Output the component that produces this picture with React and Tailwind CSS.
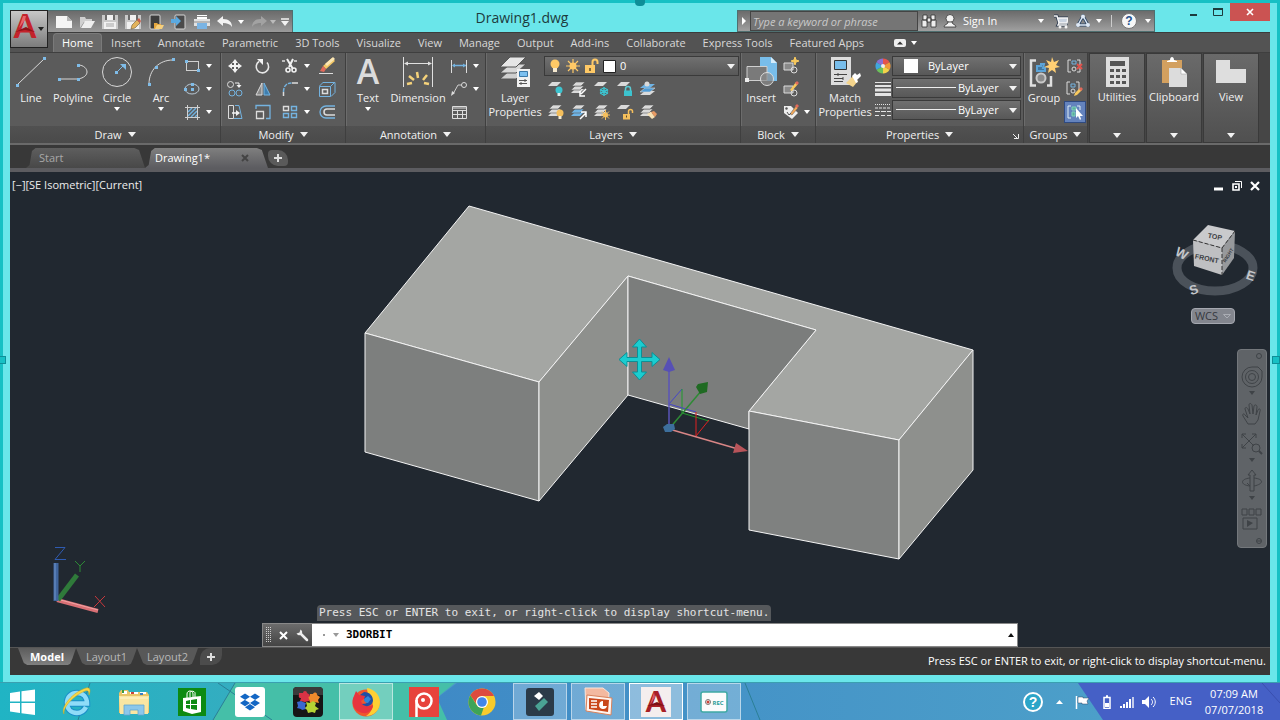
import React, { useState } from 'react';
import { FaDropbox } from 'react-icons/fa';

const Icon = ({ w = 16, h = 16, children, className = '' }) => (
    <svg width={w} height={h} viewBox={`0 0 ${w} ${h}`} fill="none" aria-hidden="true" className={`shrink-0 ${className}`}>
        {children}
    </svg>
);

const Caret = ({ className = 'text-white' }) => (
    <Icon w={6} h={4} className={className}>
        <path d="M0 0h6L3 4z" fill="currentColor" />
    </Icon>
);

const BigCaret = () => (
    <Icon w={8} h={5}>
        <path d="M0 0h8L4 5z" fill="#f2f2f2" />
    </Icon>
);

/* ---------- quick access icons ---------- */

const quickIcons = {
    New: (
        <Icon w={16} h={16}>
            <path d="M0 2h11l5 5v7H0z" fill="#f4f4f4" />
            <path d="M11 2v5h5z" fill="#b5b5b5" />
        </Icon>
    ),
    Open: (
        <Icon w={16} h={16}>
            <path d="M1 14V3h5l1 2h6v3H5z" fill="#cfcfcf" />
            <path d="M2 14l4-7h10l-4 7z" fill="#eeeeee" />
        </Icon>
    ),
    Save: (
        <Icon w={16} h={16}>
            <path d="M0 1h16v14H0z" fill="#c9c9c9" />
            <path d="M3 1h10v5H3z" fill="#6b6b6b" />
            <path d="M5 1h6v5H5zM2 8h12v7H2z" fill="#f1f1f1" />
            <path d="M4 10h8M4 12h8" stroke="#a5a5a5" />
        </Icon>
    ),
    'Save As': (
        <Icon w={16} h={16}>
            <path d="M0 1h16v14H0z" fill="#c9c9c9" />
            <path d="M3 1h10v5H3z" fill="#6b6b6b" />
            <path d="M5 1h6v5H5zM2 8h12v7H2z" fill="#f1f1f1" />
            <path d="M6 15l1-4 5-5 3 3-5 5z" fill="#e3b35b" stroke="#6b5a3a" strokeWidth=".6" />
            <path d="M12 6l2-2 2 3-1 2z" fill="#c9604c" />
        </Icon>
    ),
    'Open from Mobile': (
        <Icon w={16} h={16}>
            <rect x="2" y="1" width="10" height="14" rx="1" fill="#3d3d3d" stroke="#d5d5d5" />
            <path d="M6 15V9h3l1 1h3v5z" fill="#e4a63f" />
            <path d="M7 15l2-4h7l-2 4z" fill="#f6cf7c" />
        </Icon>
    ),
    'Save to Mobile': (
        <Icon w={16} h={16}>
            <rect x="4" y="1" width="10" height="14" rx="1" fill="#4b4b4b" stroke="#d5d5d5" />
            <path d="M0 5h5V2l5 5-5 5V9H0z" fill="#5aa9e0" />
        </Icon>
    ),
    Plot: (
        <Icon w={16} h={16}>
            <path d="M3 1h10v4H3z" fill="#ffffff" />
            <path d="M0 5h16v7H0z" fill="#e2e2e2" />
            <path d="M3 2.500h10M0 8h16" stroke="#8a8a8a" />
            <path d="M3 9h10v6H3z" fill="#7ab4e4" />
        </Icon>
    ),
    Undo: (
        <Icon w={16} h={16}>
            <path d="M0 7l6-5v3c6 0 9 3 9 8-2-3-5-4-9-4v3z" fill="#f2f2f2" />
        </Icon>
    ),
    Redo: (
        <Icon w={16} h={16}>
            <path d="M16 7l-6-5v3c-6 0-9 3-9 8 2-3 5-4 9-4v3z" fill="#a2a2a2" />
        </Icon>
    ),
};

/* ---------- small ribbon icons, 18 x 18 ---------- */

const Dot = ({ x, y }) => <rect x={x - 1} y={y - 1} width="3" height="3" fill="#7fbce8" />;

const Sheets = ({ a = '#dadada', b = '#dadada' }) => (
    <>
        <path d="M1 13h9l4-4H5z" fill={b} />
        <path d="M1 10h9l4-4H5z" fill={b} stroke="#5a5a5a" strokeWidth=".6" />
        <path d="M2 6h9l4-4H6z" fill={a} stroke="#5a5a5a" strokeWidth=".6" />
    </>
);

const Sheet = () => <path d="M1 6h9l4-4H5z" fill="#dadada" />;

const small = {
    Rectangle: (
        <Icon w={18} h={18}>
            <rect x="3.5" y="4.5" width="12" height="9" stroke="#d0d0d0" />
            <Dot x={3} y={4} />
            <Dot x={15} y={13} />
        </Icon>
    ),
    Ellipse: (
        <Icon w={18} h={18}>
            <ellipse cx="9" cy="9" rx="7" ry="5" stroke="#b9c9d6" />
            <Dot x={9} y={9} />
            <Dot x={2} y={9} />
            <Dot x={9} y={4} />
        </Icon>
    ),
    Hatch: (
        <Icon w={18} h={18}>
            <path d="M5 9l4-4M5 13l8-8M8 14l6-6M12 14l2-2" stroke="#6fb0de" strokeWidth="1.500" />
            <path d="M4.500 2v15M14.500 2v15M2 4.500h15M2 14.500h15" stroke="#d0d0d0" />
        </Icon>
    ),
    Move: (
        <Icon w={18} h={18}>
            <path d="M9 2l3 4h-2v2h2V6l4 3-4 3v-2h-2v2h2l-3 4-3-4h2v-2H6v2L2 9l4-3v2h2V6H6z" fill="#f2f2f2" />
        </Icon>
    ),
    Rotate: (
        <Icon w={18} h={18}>
            <path d="M5 4.500a6.200 6.200 0 1 0 8 1" stroke="#e8e8e8" strokeWidth="1.600" />
            <path d="M3 2h6v6z" fill="#f2f2f2" />
        </Icon>
    ),
    Trim: (
        <Icon w={18} h={18}>
            <path d="M1 4h4M13 4h4" stroke="#e0e0e0" strokeWidth="1.500" strokeDasharray="3 1" />
            <path d="M6 2l6 10M12 2L8 10" stroke="#f2f2f2" strokeWidth="2" />
            <circle cx="7" cy="13" r="2" stroke="#f2f2f2" strokeWidth="1.600" />
            <circle cx="13" cy="13" r="2" stroke="#f2f2f2" strokeWidth="1.600" />
        </Icon>
    ),
    Erase: (
        <Icon w={18} h={18}>
            <path d="M5 9l9-8 3 3-9 8z" fill="#f3c765" />
            <path d="M7 7l8-7 2 2-8 7z" fill="#fbe6b4" />
            <path d="M5 9l3 3-2 3-4-1z" fill="#e26a5b" />
            <path d="M1 16.500h14" stroke="#dcdcdc" />
        </Icon>
    ),
    Copy: (
        <Icon w={18} h={18}>
            <circle cx="4.500" cy="4.500" r="3" stroke="#dcdcdc" />
            <circle cx="6" cy="13" r="3" stroke="#74b3e0" />
            <circle cx="13" cy="13" r="3" stroke="#74b3e0" />
            <path d="M9 3h4v3" stroke="#f2f2f2" />
            <path d="M10.500 5h5L13 8z" fill="#f2f2f2" />
        </Icon>
    ),
    Mirror: (
        <Icon w={18} h={18}>
            <path d="M8 3v12H2z" fill="#8a8a8a" stroke="#dcdcdc" />
            <path d="M10 3v12h6z" fill="#3f7eae" stroke="#74b3e0" />
        </Icon>
    ),
    Fillet: (
        <Icon w={18} h={18}>
            <path d="M2.500 16v-4" stroke="#dcdcdc" strokeWidth="1.500" />
            <path d="M2.500 12c0-6 3-9 8-9" stroke="#74b3e0" strokeWidth="1.500" strokeDasharray="4 1" />
            <path d="M11 3h6" stroke="#dcdcdc" strokeWidth="1.500" />
        </Icon>
    ),
    Explode: (
        <Icon w={18} h={18}>
            <path d="M1.500 6.500h11v10h-11zM5 2.500h12v10l-4 4M1.500 6l4-4M12.500 6.500l4-4" stroke="#74b3e0" />
            <path d="M4.500 9.500h5v4h-5z" stroke="#dcdcdc" strokeWidth="1.500" />
        </Icon>
    ),
    Stretch: (
        <Icon w={18} h={18}>
            <path d="M2.500 2.500h5v13h-5z" stroke="#dcdcdc" />
            <path d="M9 2.500h4l3 13H8" stroke="#74b3e0" />
            <path d="M6 10h5" stroke="#f2f2f2" strokeWidth="1.500" />
            <path d="M10 7l4 3-4 3z" fill="#f2f2f2" />
        </Icon>
    ),
    Scale: (
        <Icon w={18} h={18}>
            <path d="M2 6V2.500h14v13h-4" stroke="#74b3e0" strokeWidth="1.300" />
            <path d="M2.500 8.500h7v7h-7z" stroke="#dcdcdc" strokeWidth="1.300" />
        </Icon>
    ),
    Array: (
        <Icon w={18} h={18}>
            <path d="M2.500 3.500h5v4h-5z" stroke="#dcdcdc" strokeWidth="1.400" />
            <path d="M10.500 3.500h5v4h-5zM2.500 10.500h5v4h-5zM10.500 10.500h5v4h-5z" stroke="#74b3e0" strokeWidth="1.400" />
        </Icon>
    ),
    Offset: (
        <Icon w={18} h={18}>
            <path d="M17 3H8a6 6 0 0 0 0 12h9" stroke="#74b3e0" strokeWidth="1.300" />
            <path d="M17 6H9a3 3 0 0 0 0 6h8" stroke="#dcdcdc" strokeWidth="1.500" />
        </Icon>
    ),
    Linear: (
        <Icon w={18} h={18}>
            <path d="M1.500 3v13M16.500 3v13" stroke="#dcdcdc" />
            <path d="M3 8.500h13" stroke="#74b3e0" strokeWidth="1.500" />
            <path d="M2 8.500l3-2v4zM16 8.500l-3-2v4z" fill="#74b3e0" />
        </Icon>
    ),
    Leader: (
        <Icon w={18} h={18}>
            <circle cx="14" cy="5" r="2.500" stroke="#dcdcdc" />
            <path d="M12 5H8l-5 9" stroke="#cfcfcf" />
            <path d="M1 16l1-5 3 2z" fill="#dcdcdc" />
        </Icon>
    ),
    Table: (
        <Icon w={18} h={18}>
            <path d="M2.500 3.500h14v12h-14zM2 7.500h15M2 11.500h15M7.500 7v9M12.500 7v9" stroke="#dcdcdc" />
            <path d="M3 5h13" stroke="#dcdcdc" />
        </Icon>
    ),
    Off: (
        <Icon w={18} h={18}>
            <Sheet />
            <circle cx="12" cy="10" r="3.500" fill="#3cc3cf" />
            <path d="M10.500 13h3v3h-3z" fill="#e0f0f0" />
        </Icon>
    ),
    Isolate: (
        <Icon w={18} h={18}>
            <Sheets />
            <path d="M16 9l-5 5M10 11v5h5" stroke="#ffffff" strokeWidth="1.500" />
        </Icon>
    ),
    Freeze: (
        <Icon w={18} h={18}>
            <Sheet />
            <path d="M11 7v9M7 9.500l8 4M15 9.500l-8 4" stroke="#3cc3cf" strokeWidth="1.500" />
            <circle cx="11" cy="11.500" r="3.500" stroke="#3cc3cf" />
        </Icon>
    ),
    Lock: (
        <Icon w={18} h={18}>
            <Sheet />
            <path d="M9.500 11V9a2.500 2.500 0 0 1 5 0v2" stroke="#5bcad3" strokeWidth="1.500" />
            <path d="M8 10.500h8V16H8z" fill="#3cc3cf" />
        </Icon>
    ),
    'Make Current': (
        <Icon w={18} h={18}>
            <path d="M1 15h10l5-4H6z" fill="#dadada" />
            <path d="M1 12h10l5-4H6z" fill="#4f9cd6" stroke="#dadada" strokeWidth=".6" />
            <path d="M1 8h10l5-4H6z" fill="#6fb4e6" />
            <circle cx="8" cy="4" r="2.500" fill="#dadada" />
        </Icon>
    ),
    'Turn On': (
        <Icon w={18} h={18}>
            <Sheets />
            <circle cx="13" cy="10" r="3.500" fill="#f5bf5c" />
            <path d="M11.500 13h3v3h-3z" fill="#f5ead0" />
        </Icon>
    ),
    Unisolate: (
        <Icon w={18} h={18}>
            <Sheets b="#6fb4e6" />
            <path d="M10 16l6-6M11 9h5v5" stroke="#ffffff" strokeWidth="1.500" />
        </Icon>
    ),
    Thaw: (
        <Icon w={18} h={18}>
            <Sheets />
            <circle cx="12.500" cy="12" r="2.500" fill="#f5bf5c" />
            <path d="M12.500 7v10M8 12h9M9 8.500l7 7M16 8.500l-7 7" stroke="#f5bf5c" />
        </Icon>
    ),
    Unlock: (
        <Icon w={18} h={18}>
            <Sheet />
            <path d="M12.500 11V8.500a2 2 0 0 1 4 0V10" stroke="#f5bf5c" strokeWidth="1.500" />
            <path d="M7 11h7v5.500H7z" fill="#f5bf5c" />
            <path d="M10.500 12.500v2" stroke="#5a4a2a" />
        </Icon>
    ),
    'Match Layer': (
        <Icon w={18} h={18}>
            <Sheets />
            <path d="M8 11l4-2 4 5-3 2z" fill="#f7e2b5" />
            <path d="M12 9l3-1 3 3-2 3z" fill="#e89a63" />
        </Icon>
    ),
    'Create Block': (
        <Icon w={18} h={18}>
            <path d="M2 13V6h9v7z" fill="#8a8a8a" stroke="#dcdcdc" />
            <circle cx="12" cy="13" r="3" stroke="#dcdcdc" />
            <path d="M13 0l1 3 3 1-3 1-1 3-1-3-3-1 3-1z" fill="#f8c95e" stroke="#f8c95e" />
        </Icon>
    ),
    'Edit Block': (
        <Icon w={18} h={18}>
            <path d="M2 13V6h9v7z" fill="#8a8a8a" stroke="#dcdcdc" />
            <circle cx="12" cy="13" r="3" stroke="#dcdcdc" />
            <path d="M8 10l6-8 2 2-6 7z" fill="#f8c95e" />
            <path d="M13 3l2-2 2 2-2 2z" fill="#e26a5b" />
        </Icon>
    ),
    'Edit Attributes': (
        <Icon w={18} h={18}>
            <path d="M2 3h7l7 7-6 6-8-6z" fill="#eeeeee" />
            <circle cx="4.500" cy="5.500" r="1.200" fill="#555" />
            <path d="M8 11l6-8 2 2-6 7z" fill="#f3a858" stroke="#555" strokeWidth=".5" />
            <path d="M13 3l2-2 2 2-2 2z" fill="#e26a5b" />
            <path d="M5 9l2 3 2-2" stroke="#555" />
        </Icon>
    ),
    Ungroup: (
        <Icon w={18} h={18}>
            <path d="M5 3H2v12h3M11 3h3v12h-3" stroke="#dcdcdc" />
            <path d="M6 4h4v3H6z" stroke="#74b3e0" />
            <circle cx="8" cy="12" r="2" stroke="#dcdcdc" />
            <path d="M11 7l5 5M16 7l-5 5" stroke="#e0524c" strokeWidth="2" />
        </Icon>
    ),
    'Group Edit': (
        <Icon w={18} h={18}>
            <path d="M4 2H1v12h3M10 2h3v8" stroke="#dcdcdc" />
            <path d="M5 4h4v3H5z" stroke="#74b3e0" />
            <circle cx="7" cy="11" r="2" stroke="#dcdcdc" />
            <path d="M8 16l1-3 5-5 2 2-5 5z" fill="#f8c95e" />
            <path d="M13 9l2-2 2 2-2 2z" fill="#e26a5b" />
        </Icon>
    ),
    'Group Selection': (
        <Icon w={18} h={18}>
            <path d="M5 3H2v12h3M11 3h3v4" stroke="#dcecf5" />
            <path d="M6 4h4v3H6zM6 9h3v4H6z" fill="#5dae9d" stroke="#7fd0bb" />
            <path d="M10 5v10l2-2 2 4 1-1-1-3h3z" fill="#ffffff" />
        </Icon>
    ),
};

/* ---------- large ribbon icons ---------- */

const large = {
    Line: (
        <Icon w={32} h={32}>
            <path d="M3 28L29 3" stroke="#d8d8d8" />
            <Dot x={2} y={29} />
            <Dot x={29} y={2} />
        </Icon>
    ),
    Polyline: (
        <Icon w={32} h={32}>
            <path d="M2 23h19c6-1 9-4 9-7s-3-7-9-7" stroke="#d8d8d8" />
            <Dot x={2} y={23} />
            <Dot x={21} y={23} />
            <Dot x={21} y={9} />
        </Icon>
    ),
    Circle: (
        <Icon w={32} h={32}>
            <circle cx="16" cy="16" r="14.500" stroke="#d8d8d8" />
            <path d="M16 16l7-7" stroke="#7fbce8" />
            <path d="M14 15h3v3h-3z" fill="#7fbce8" />
            <path d="M19 8h6v6z" fill="#7fbce8" />
        </Icon>
    ),
    Arc: (
        <Icon w={32} h={32}>
            <path d="M4 28C4 14 14 4 28 4" stroke="#d8d8d8" />
            <Dot x={4} y={28} />
            <Dot x={11} y={11} />
            <Dot x={28} y={3} />
        </Icon>
    ),
    Text: (
        <Icon w={32} h={32} className="overflow-visible">
            <text x="16" y="28" textAnchor="middle" fontSize="34" fontWeight="600" fontFamily="Open Sans" fill="#dcdcdc">
                A
            </text>
        </Icon>
    ),
    Dimension: (
        <Icon w={32} h={32}>
            <path d="M1.500 1v30M30.500 1v30M3 7.500h26" stroke="#e0e0e0" />
            <path d="M2 7.500l4-2v4zM30 7.500l-4-2v4z" fill="#e0e0e0" />
            <path d="M5 28l5-1M7 20l5 4M15 16l1 6M25 19l-4 5M27 28l-5-1" stroke="#f5d27a" strokeWidth="2.500" />
        </Icon>
    ),
    Layer: (
        <Icon w={32} h={32}>
            <path d="M1 23h16l10-9H11z" fill="#cfcfcf" stroke="#555" />
            <path d="M1 17h16l10-9H11z" fill="#d8d8d8" stroke="#555" />
            <path d="M1 11h16L27 1H11z" fill="#e6e6e6" stroke="#555" />
            <path d="M18 13h13v18H18z" fill="#f1f1f1" />
            <path d="M20.500 15.500h8v5h-8z" fill="#7cc0f0" stroke="#3c79a8" />
            <path d="M20 24.500h8M20 27.500h8M26 23v3M22 26v3" stroke="#555" />
        </Icon>
    ),
    Insert: (
        <Icon w={32} h={32}>
            <path d="M15 1h11l6 6v18H15z" fill="#78bdea" />
            <path d="M26 1v6h6z" fill="#d5ecfb" />
            <path d="M2 10.500h20v14H2z" fill="#7a7a7a" stroke="#cfcfcf" />
            <circle cx="22" cy="23" r="6.500" fill="#8a8a8a" fillOpacity=".7" stroke="#dcdcdc" />
            <path d="M0 22h4v4H0z" fill="#ededed" />
        </Icon>
    ),
    Match: (
        <Icon w={32} h={32}>
            <path d="M2 1h20v28H2z" fill="#dcdcdc" />
            <path d="M5.500 4.500h12v9h-12z" fill="#78bdea" stroke="#333" />
            <path d="M5 18.500h13M5 22.500h9M9 17v3M14 21v3M5 25.500h9" stroke="#444" />
            <path d="M17 27l7-7 5 5-5 6z" fill="#f5d58c" />
            <path d="M23 20l3-3 2 2 3-2 1 3-4 4 1 2-2 1z" fill="#ffffff" />
        </Icon>
    ),
    Group: (
        <Icon w={32} h={32}>
            <path d="M8 4.500H3v25h5M19 29.500h4V20" stroke="#e0e0e0" strokeWidth="2.500" />
            <path d="M9 10h4v-2h3l-1 4h2v3H9z" stroke="#5ca4d8" strokeWidth="2" fill="#42759c" />
            <circle cx="13" cy="22" r="4.500" stroke="#c9c9c9" strokeWidth="2" fill="#8a8a8a" />
            <path d="M24 1l2 5 5-2-3 5 4 2-5 1 1 5-4-3-4 3 1-5-5-1 5-2-3-5 5 2z" fill="#ffcf73" />
        </Icon>
    ),
    Utilities: (
        <Icon w={32} h={32}>
            <path d="M5 1h23v30H5z" fill="#dedede" />
            <path d="M9 5h15v5H9z" fill="#555" />
            <path d="M9 13h4v3H9zM15 13h4v3h-4zM21 13h4v3h-4zM9 19h4v3H9zM15 19h4v3h-4zM21 19h4v3h-4zM9 25h4v3H9zM15 25h4v3h-4zM21 25h4v3h-4z" fill="#555" />
        </Icon>
    ),
    Clipboard: (
        <Icon w={32} h={32}>
            <path d="M4 4h20v23H4z" fill="#d3a05f" />
            <path d="M9 5l3-1c0-4 4-4 4 0l3 1v1H9z" fill="#ffffff" />
            <path d="M11 12h12l6 6v13H11z" fill="#dcdcdc" />
            <path d="M23 12v6h6z" fill="#ffffff" stroke="#999" strokeWidth=".5" />
        </Icon>
    ),
    View: (
        <Icon w={32} h={32}>
            <path d="M1 4h14v9h16v14H1z" fill="#dedede" />
        </Icon>
    ),
};

const LargeTool = ({ icon, lines, caret, className }) => (
    <button className={`flex flex-col items-center pt-[3px] ${className}`}>
        {large[icon]}
        <span className="mt-[3px] block text-center text-[11px] leading-[14px] whitespace-pre">{lines.join('\n')}</span>
        {caret && <Caret className="mt-[2px] text-white" />}
    </button>
);

const SmallTool = ({ name, active, className = '' }) => (
    <button
        aria-label={name}
        className={`flex h-[22px] items-center justify-center ${active ? 'border border-[#2f4a80] bg-[#6483bd]' : ''} ${className}`}
    >
        {small[name]}
    </button>
);

const Drop = ({ label, empty }) =>
    empty ? (
        <span></span>
    ) : (
        <button aria-label={`${label} options`} className="flex h-[22px] items-center justify-center">
            <Caret />
        </button>
    );

const Panel = ({ title, launcher, className, children }) => (
    <section className={`flex shrink-0 flex-col border-r border-[#3f3f3f] shadow-[1px_0_0_#6c6c6c] ${className}`}>
        <div className="flex h-[73px] items-start">{children}</div>
        <div className="relative flex h-[17px] items-center justify-center bg-gradient-to-b from-[#515151] to-[#4a4a4a]">
            <button className="flex items-center gap-[6px] text-[11px] leading-4">
                {title}
                <BigCaret />
            </button>
            {launcher && (
                <button aria-label="Properties palette" className="absolute right-1 bottom-1">
                    <Icon w={6} h={6}>
                        <path d="M0 1l4 4M5.500 1v4.500H1" stroke="#eee" />
                    </Icon>
                </button>
            )}
        </div>
    </section>
);

const SidePanel = ({ name }) => (
    <button className="mr-px flex w-14 shrink-0 flex-col items-center border border-[#3a3a3a] bg-gradient-to-b from-[#6a6a6a] to-[#505050] pt-[2px]">
        {large[name]}
        <span className="mt-[2px] block text-[11px] leading-[14px]">{name}</span>
        <span className="mt-auto mb-1">
            <BigCaret />
        </span>
    </button>
);

const DrawPanel = () => (
    <Panel title="Draw" className="w-[211px]">
        <LargeTool icon="Line" lines={['Line']} className="w-[42px]" />
        <LargeTool icon="Polyline" lines={['Polyline']} className="w-[42px]" />
        <LargeTool icon="Circle" lines={['Circle']} caret className="w-[46px]" />
        <LargeTool icon="Arc" lines={['Arc']} caret className="w-[42px]" />
        <div className="grid grid-cols-[20px_14px] gap-y-px pt-[2px]">
            {['Rectangle', 'Ellipse', 'Hatch'].map((name) => (
                <React.Fragment key={name}>
                    <SmallTool name={name} />
                    <Drop label={name} />
                </React.Fragment>
            ))}
        </div>
    </Panel>
);

const modifyTools = [
    ['Move', 'Rotate', 'Trim', 'Erase'],
    ['Copy', 'Mirror', 'Fillet', 'Explode'],
    ['Stretch', 'Scale', 'Array', 'Offset'],
];

const ModifyPanel = () => (
    <Panel title="Modify" className="w-[125px]">
        <div className="grid grid-cols-[28px_27px_28px_6px_34px] gap-y-px pt-[2px]">
            {modifyTools.map((row) => (
                <React.Fragment key={row[0]}>
                    <SmallTool name={row[0]} />
                    <SmallTool name={row[1]} />
                    <SmallTool name={row[2]} />
                    <Drop label={row[2]} />
                    <SmallTool name={row[3]} />
                </React.Fragment>
            ))}
        </div>
    </Panel>
);

const AnnotationPanel = () => (
    <Panel title="Annotation" className="w-[140px]">
        <LargeTool icon="Text" lines={['Text']} caret className="w-[44px]" />
        <LargeTool icon="Dimension" lines={['Dimension']} className="w-[56px]" />
        <div className="grid grid-cols-[26px_8px] gap-y-px pt-[2px]">
            <SmallTool name="Linear" />
            <Drop label="Linear" />
            <SmallTool name="Leader" />
            <Drop label="Leader" />
            <SmallTool name="Table" />
            <Drop empty />
        </div>
    </Panel>
);

const layerTools = ['Off', 'Isolate', 'Freeze', 'Lock', 'Make Current', 'Turn On', 'Unisolate', 'Thaw', 'Unlock', 'Match Layer'];

const selectBox = 'block h-5 w-full appearance-none border border-[#3a3a3a] bg-gradient-to-b from-[#707070] to-[#585858] text-[11px] leading-4 text-white';

const SelectCaret = () => (
    <span className="pointer-events-none absolute inset-y-0 right-1 flex items-center">
        <BigCaret />
    </span>
);

const LayersPanel = () => (
    <Panel title="Layers" className="w-[255px]">
        <LargeTool icon="Layer" lines={['Layer', 'Properties']} className="w-[58px]" />
        <div className="w-[195px] pt-[3px]">
            <div className="relative">
                <select aria-label="Layer" className={`${selectBox} pl-[75px]`}>
                    <option>0</option>
                </select>
                <div className="pointer-events-none absolute top-[2px] left-1 flex gap-[2px]">
                    <Icon>
                        <circle cx="7" cy="6" r="4.500" fill="#ffc966" />
                        <path d="M5 10h4v4H5z" fill="#f7ead0" />
                    </Icon>
                    <Icon>
                        <circle cx="7" cy="8" r="3.500" fill="#ffc966" />
                        <path d="M7 1v14M0 8h14M2 3l10 10M12 3L2 13" stroke="#ffc966" strokeWidth="1.200" />
                    </Icon>
                    <Icon>
                        <path d="M8.500 8V4a2.500 2.500 0 0 1 5 0v2" stroke="#ffc966" strokeWidth="2" />
                        <path d="M1 7h10v8H1z" fill="#ffc966" />
                        <path d="M6 10v3" stroke="#5a4a2a" strokeWidth="1.500" />
                    </Icon>
                    <Icon>
                        <path d="M1.500 2.500h12v12h-12z" fill="#fff" stroke="#222" />
                    </Icon>
                </div>
                <SelectCaret />
            </div>
            <div className="grid grid-cols-[repeat(5,23px)] gap-y-px pt-[2px]">
                {layerTools.map((name) => (
                    <SmallTool key={name} name={name} />
                ))}
            </div>
        </div>
    </Panel>
);

const BlockPanel = () => (
    <Panel title="Block" className="w-[75px]">
        <LargeTool icon="Insert" lines={['Insert']} className="w-[40px]" />
        <div className="grid grid-cols-[20px_12px] gap-y-px pt-[2px]">
            <SmallTool name="Create Block" />
            <Drop empty />
            <SmallTool name="Edit Block" />
            <Drop empty />
            <SmallTool name="Edit Attributes" />
            <Drop label="Attributes" />
        </div>
    </Panel>
);

const wheel = ['#e5534b', '#f0993a', '#f3d34a', '#6cc05a', '#3fa7dd', '#8b6fd0'];

const PropertiesPanel = () => (
    <Panel title="Properties" launcher className="w-[208px]">
        <LargeTool icon="Match" lines={['Match', 'Properties']} className="w-[58px]" />
        <div className="flex w-[18px] flex-col items-center gap-[6px] pt-[5px]">
            <Icon>
                {wheel.map((color, i) => (
                    <path key={color} d="M8 8V.5a7.500 7.500 0 0 1 6.500 3.750z" fill={color} transform={`rotate(${i * 60} 8 8)`} />
                ))}
                <circle cx="8" cy="8" r="2" fill="#eee" />
            </Icon>
            <Icon>
                <path d="M0 2.500h16" stroke="#e4e4e4" />
                <path d="M0 6h16" stroke="#e4e4e4" strokeWidth="2" />
                <path d="M0 10h16" stroke="#e4e4e4" strokeWidth="3" />
                <path d="M0 14.500h16" stroke="#e4e4e4" strokeWidth="3" />
            </Icon>
            <Icon>
                <path d="M0 2.500h16" stroke="#e4e4e4" strokeDasharray="1 1" />
                <path d="M0 6h16" stroke="#e4e4e4" strokeDasharray="3 1" />
                <path d="M0 9.500h16" stroke="#e4e4e4" strokeDasharray="5 1" />
                <path d="M0 13.500h16" stroke="#e4e4e4" strokeDasharray="4 2" />
            </Icon>
        </div>
        <div className="flex w-[129px] flex-col gap-[2px] pt-[3px]">
            <div className="relative">
                <select aria-label="Object color" className={`${selectBox} pl-[35px]`}>
                    <option>ByLayer</option>
                </select>
                <span className="pointer-events-none absolute top-[3px] left-3 size-[14px] bg-white"></span>
                <SelectCaret />
            </div>
            {['Lineweight', 'Linetype'].map((label) => (
                <div key={label} className="relative">
                    <select aria-label={label} className={`${selectBox} pl-[65px]`}>
                        <option>ByLayer</option>
                    </select>
                    <span className="pointer-events-none absolute top-[9px] left-1 h-px w-[60px] bg-[#eeeeee]"></span>
                    <SelectCaret />
                </div>
            ))}
        </div>
    </Panel>
);

const GroupsPanel = () => (
    <Panel title="Groups" className="w-[64px]">
        <LargeTool icon="Group" lines={['Group']} className="w-[40px]" />
        <div className="grid w-[22px] gap-y-px pt-[2px]">
            <SmallTool name="Ungroup" />
            <SmallTool name="Group Edit" />
            <SmallTool name="Group Selection" active />
        </div>
    </Panel>
);

const ribbonTabs = ['Home', 'Insert', 'Annotate', 'Parametric', '3D Tools', 'Visualize', 'View', 'Manage', 'Output', 'Add-ins', 'Collaborate', 'Express Tools', 'Featured Apps'];

const TitleBar = () => (
    <header className="relative flex h-[29px] items-end">
        <button
            aria-label="Application menu"
            className="absolute top-[7px] left-0 z-10 flex h-[38px] w-[38px] items-center border border-[#222222] bg-gradient-to-b from-[#c8c8c8] to-[#7c7c7c]"
        >
            <Icon w={27} h={34} className="overflow-visible">
                <text x="14" y="26" textAnchor="middle" fontSize="32" fontWeight="900" fontFamily="Lato" fill="#c3232b">
                    A
                </text>
                <path d="M12 4l-4 12 6-8 1-4z" fill="#e8656a" />
                <path d="M4 20l11-5 9 5-10-2z" fill="#8f1219" />
            </Icon>
            <Caret className="text-[#222222]" />
        </button>
        <div className="ml-[38px] flex h-[22px] w-[245px] items-center border-t border-r border-[#4f6f70] bg-gradient-to-b from-[#6b6b6b] to-[#9a9a9a] pl-2">
            {['New', 'Open', 'Save', 'Save As', 'Open from Mobile', 'Save to Mobile', 'Plot'].map((name) => (
                <button key={name} aria-label={name} className="mr-[7px]">
                    {quickIcons[name]}
                </button>
            ))}
            <button aria-label="Undo">{quickIcons.Undo}</button>
            <button aria-label="Undo history" className="ml-[5px]">
                <Caret />
            </button>
            <button aria-label="Redo" className="ml-[7px]">
                {quickIcons.Redo}
            </button>
            <button aria-label="Redo history" className="ml-[3px]">
                <Caret className="text-[#bbbbbb]" />
            </button>
            <button aria-label="Customize toolbar" className="ml-[5px]">
                <Icon w={8} h={8}>
                    <path d="M0 1h8" stroke="#f2f2f2" strokeWidth="1.500" />
                    <path d="M0 3h8L4 8z" fill="#f2f2f2" />
                </Icon>
            </button>
        </div>
        <h1 className="mx-auto self-center pl-[14px] text-sm text-[#1d3b3d]">Drawing1.dwg</h1>
        <div className="mr-[115px] flex h-[22px] w-[418px] items-center border border-[#4f6f70] bg-gradient-to-b from-[#6b6b6b] to-[#a0a0a0] text-white">
            <button aria-label="Toggle search" className="flex w-3 justify-center">
                <Icon w={4} h={8}>
                    <path d="M0 0l4 4-4 4z" fill="#fff" />
                </Icon>
            </button>
            <input
                type="text"
                aria-label="Search"
                placeholder="Type a keyword or phrase"
                className="h-5 w-[168px] border border-[#444444] bg-[#757575] px-[2px] text-[11px] italic placeholder:text-[#c9c9c9]"
            />
            <button aria-label="Find" className="ml-[3px]">
                <Icon w={16} h={16}>
                    <path d="M2 2h4v5H2zM10 2h4v5h-4zM1 7h5v7H1zM10 7h5v7h-5zM6 5h4v4H6z" fill="#eeeeee" stroke="#333" strokeWidth=".8" />
                </Icon>
            </button>
            <button className="ml-[6px] flex items-center gap-[6px] text-[11px]">
                <Icon w={14} h={16}>
                    <circle cx="7" cy="5.500" r="4" fill="#f3f3f3" stroke="#333" strokeWidth=".8" />
                    <path d="M1 14c0-3 4-2 4-5h4c0 3 4 2 4 5z" fill="#f3f3f3" stroke="#333" strokeWidth=".8" />
                </Icon>
                Sign In
            </button>
            <button aria-label="Account menu" className="ml-auto">
                <Caret />
            </button>
            <button aria-label="App Store" className="ml-[10px]">
                <Icon w={14} h={16}>
                    <path d="M0 3h3l2 7h8l1-5H4M5 10l-1 2h9" stroke="#26344a" strokeWidth="3" />
                    <path d="M4 5h10l-1 5H5z" fill="#c9d3e0" />
                    <path d="M0 3h3l2 7h8l1-5H4M5 10l-1 2h9" stroke="#f5f5f5" strokeWidth="1.500" />
                    <circle cx="6" cy="14" r="1.500" fill="#f5f5f5" />
                    <circle cx="12" cy="14" r="1.500" fill="#f5f5f5" />
                </Icon>
            </button>
            <button aria-label="Stay connected" className="ml-2">
                <Icon w={14} h={14}>
                    <path d="M7 2l5 9H2z" stroke="#2b4564" strokeWidth="3" />
                    <path d="M7 2l5 9H2z" stroke="#dfe9f5" strokeWidth="1.400" />
                    <circle cx="7" cy="2.500" r="2" fill="#dfe9f5" />
                    <circle cx="2" cy="11" r="2" fill="#dfe9f5" />
                    <circle cx="12" cy="11" r="2" fill="#dfe9f5" />
                </Icon>
            </button>
            <button aria-label="Connect options" className="ml-[6px]">
                <Caret />
            </button>
            <span className="mx-[9px] h-3 w-px bg-[#cccccc]"></span>
            <button aria-label="Help">
                <Icon w={16} h={16}>
                    <circle cx="8" cy="8" r="7.500" fill="#f7f7f7" stroke="#777" />
                    <text x="8" y="12" textAnchor="middle" fontSize="12" fontWeight="700" fontFamily="Liberation Sans" fill="#24508c">
                        ?
                    </text>
                </Icon>
            </button>
            <button aria-label="Help options" className="mr-[3px] ml-2">
                <Caret />
            </button>
        </div>
        <div className="absolute top-0 right-0 flex">
            <button aria-label="Minimize" className="flex h-[18px] w-6 items-center justify-center">
                <Icon w={8} h={8}>
                    <path d="M0 7h7" stroke="#1d3b3d" strokeWidth="2" />
                </Icon>
            </button>
            <button aria-label="Maximize" className="flex h-[18px] w-6 items-center justify-center">
                <Icon w={10} h={8}>
                    <path d="M.5 1h9v6.500h-9z" stroke="#1d3b3d" />
                    <path d="M0 1h10" stroke="#1d3b3d" strokeWidth="2" />
                </Icon>
            </button>
            <button aria-label="Close" className="flex h-[18px] w-10 items-center justify-center bg-[#cb5352]">
                <Icon w={8} h={8}>
                    <path d="M1 1l6 6M7 1L1 7" stroke="#fff" strokeWidth="1.600" />
                </Icon>
            </button>
        </div>
    </header>
);

const Ribbon = () => (
    <>
        <nav className="flex h-[20px] items-stretch gap-px border-t border-[#3c3c3c] bg-[#535353] pl-[43px] text-[11px]">
            {ribbonTabs.map((tab, i) => (
                <button
                    key={tab}
                    className={`px-2 leading-[18px] ${i === 0 ? 'rounded-t-sm border-x border-t border-[#7a7a7a] bg-[#6a6a6a] text-white' : 'text-[#d8d8d8]'}`}
                >
                    {tab}
                </button>
            ))}
            <button aria-label="Minimize ribbon" className="ml-[21px] flex items-center gap-[5px]">
                <Icon w={12} h={8}>
                    <rect width="12" height="8" rx="2" fill="#eeeeee" />
                    <path d="M3 5.500h6L6 2.500z" fill="#333" />
                </Icon>
                <Caret />
            </button>
        </nav>
        <div className="flex overflow-hidden border-t border-[#3f3f3f] bg-[#5b5b5b] text-[#f0f0f0]">
            <DrawPanel />
            <ModifyPanel />
            <AnnotationPanel />
            <LayersPanel />
            <BlockPanel />
            <PropertiesPanel />
            <GroupsPanel />
            <div className="flex flex-1 bg-[#464646] pl-px">
                <SidePanel name="Utilities" />
                <SidePanel name="Clipboard" />
                <SidePanel name="View" />
            </div>
        </div>
    </>
);

const fileTabShape = '[clip-path:polygon(0_100%,3%_85%,5%_15%,8%_0,91%_0,95%_10%,100%_100%)]';

const FileTabs = () => (
    <nav className="flex h-[29px] items-end border-t-2 border-b-4 border-t-[#6a6a6a] border-b-[#5c5c60] bg-[#383838] pl-4 text-[11px]">
        <button className={`h-5 w-[119px] bg-gradient-to-b from-[#5e5e5e] to-[#484848] pl-[13px] text-left text-[#a8a8a8] ${fileTabShape}`}>Start</button>
        <div className={`flex h-5 w-[123px] items-center justify-between bg-gradient-to-b from-[#7f7f7f] to-[#5c5c60] pr-[19px] pl-[10px] ${fileTabShape}`}>
            <button className="text-white">Drawing1*</button>
            <button aria-label="Close tab">
                <Icon w={8} h={8}>
                    <path d="M1 1l6 6M7 1L1 7" stroke="#444" strokeWidth="2" />
                </Icon>
            </button>
        </div>
        <button
            aria-label="New tab"
            className="mb-[2px] flex h-4 w-5 items-center justify-center rounded-tl-[4px] rounded-tr-[10px] rounded-br-[4px] rounded-bl-[10px] bg-[#5a5a5a]"
        >
            <Icon w={8} h={8}>
                <path d="M4 0v8M0 4h8" stroke="#dddddd" strokeWidth="2" />
            </Icon>
        </button>
    </nav>
);

const Model = () => (
    <svg className="absolute inset-0 h-full w-full" viewBox="10 172 1260 475" aria-label="3D solid" role="img">
        <g stroke="#f4f4f4" strokeLinejoin="round">
            <path d="M469 206L973 350L899 440L749 411L816 330L628 276L539 382L365 333z" fill="#a4a6a3" />
            <path d="M365 333L539 382V501L365 452z" fill="#7d7f7e" />
            <path d="M539 382L628 276V395L539 501z" fill="#8e908d" />
            <path d="M628 276L816 330L749 411V429L628 395z" fill="#7b7d7c" />
            <path d="M749 411L899 440V559L749 530z" fill="#7f8180" />
            <path d="M899 440L973 350V470L899 559z" fill="#8e908d" />
        </g>
        <g fill="none">
            <path d="M669 404L682 389" stroke="#4646c8" />
            <path d="M682 389V413L709 421" stroke="#1f9c2c" />
            <path d="M669 404L696 412" stroke="#4646c8" />
            <path d="M696 412V436L709 420" stroke="#e02020" />
            <path d="M669 429V370" stroke="#5a55b8" strokeWidth="1.500" />
            <path d="M669 429L702 390" stroke="#2e8a35" strokeWidth="1.500" />
            <path d="M669 429L738 449" stroke="#d98686" strokeWidth="1.500" />
        </g>
        <path d="M669 357L675 370L669 372L663 370z" fill="#5750b5" />
        <path d="M708 382L707 392L700 394L696 387L698 384z" fill="#1f6a22" />
        <path d="M748 451L736 443L733 453z" fill="#b8545a" />
        <path d="M663 427l4-3h7l1 5-4 3h-6z" fill="#3d6f9c" />
        <path
            d="M639.500 339l7 8h-5v10.500h10.500v-5l8 7-8 7v-5H641.500V372h5l-7 8-7-8h5v-10.500H627v5l-8-7 8-7v5h10.500V347h-5z"
            fill="#1bcdd0"
            stroke="#0c8f95"
        />
    </svg>
);

const Ucs = () => (
    <svg className="absolute bottom-[34px] left-10" width="60" height="68" viewBox="50 545 60 68" aria-hidden="true" fill="none">
        <path d="M57 600L98 611" stroke="#d97075" strokeWidth="4" />
        <path d="M57 599L98 610" stroke="#f0a3a3" />
        <path d="M58 600L77 575" stroke="#2f7a3a" strokeWidth="5" />
        <path d="M56 601V563" stroke="#40659c" strokeWidth="5" />
        <path d="M55 600V563" stroke="#6f96cc" />
        <path d="M55 547.500H65L55 559.500H66" stroke="#2f5bb0" />
        <path d="M75 561l5 5 5-5M80 566v6" stroke="#2c8a35" />
        <path d="M95 596l10 11M105 596L94 607" stroke="#c8383c" />
    </svg>
);

const ViewCube = () => (
    <svg className="absolute top-[46px] right-[10px]" width="90" height="82" viewBox="1170 218 90 82" role="img" aria-label="View cube">
        <ellipse cx="1215" cy="268" rx="38" ry="23" fill="none" stroke="#4b525a" strokeWidth="9" />
        <path d="M1193 240L1208 225L1235 231L1222 248z" fill="#c9cacc" />
        <path d="M1193 240L1222 248L1222 275L1194 266z" fill="#bfc0c2" />
        <path d="M1222 248L1235 231L1234 258L1222 275z" fill="#97999c" />
        <path d="M1193 240L1222 248L1235 231M1222 248V275" fill="none" stroke="#333" strokeDasharray="4 2" />
        <g fontFamily="Liberation Sans" fontWeight="700" textAnchor="middle" fill="#3c3f44">
            <text x="1215" y="239" fontSize="7" transform="rotate(10 1215 236)">TOP</text>
            <text x="1207" y="261" fontSize="7" transform="rotate(12 1207 258)">FRONT</text>
            <text x="1228" y="257" fontSize="5" transform="rotate(-58 1228 255)">RIGHT</text>
        </g>
        <g fontFamily="Liberation Sans" fontWeight="700" textAnchor="middle" fill="#c3c6ca" fontSize="13">
            <text x="1182" y="258" transform="rotate(28 1182 253)">W</text>
            <text x="1194" y="294" transform="rotate(-18 1194 290)">S</text>
            <text x="1251" y="280" transform="rotate(18 1251 275)">E</text>
        </g>
    </svg>
);

const navTools = [
    {
        name: 'Steering wheel',
        caret: true,
        icon: (
            <Icon w={22} h={22}>
                <path d="M11 1h6l4 4v6a10 10 0 1 1-10-10z" stroke="#3f4347" />
                <circle cx="11" cy="11" r="6.500" stroke="#3f4347" />
                <circle cx="11" cy="11" r="3.500" stroke="#3f4347" />
            </Icon>
        ),
    },
    {
        name: 'Pan',
        icon: (
            <Icon w={22} h={24}>
                <path
                    d="M7 22l-5-8c-1-2 1-3 2-1l3 3-3-9c0-2 2-2 3 0l2 5-1-9c0-2 2-2 3 0l1 9 1-8c1-2 3-1 3 1l-1 8 2-5c1-2 3-1 2 1l-2 9-3 4z"
                    stroke="#3f4347"
                />
            </Icon>
        ),
    },
    {
        name: 'Zoom extents',
        caret: true,
        icon: (
            <Icon w={22} h={22}>
                <path d="M1 1l12 12M15 1L1 15M1 5V1h4M11 1h4v4M1 11v4h4" stroke="#3f4347" />
                <circle cx="15" cy="15" r="4" stroke="#3f4347" />
                <path d="M18 18l3 3" stroke="#3f4347" strokeWidth="2" />
            </Icon>
        ),
    },
    {
        name: 'Orbit',
        caret: true,
        icon: (
            <Icon w={22} h={24}>
                <path d="M11 1l4 5h-2v16H9V6H7z" stroke="#3f4347" />
                <path d="M9 9c-10 1-10 7 0 8l-3-3M13 9c10 1 10 6 0 8" stroke="#3f4347" />
            </Icon>
        ),
    },
    {
        name: 'Show motion',
        icon: (
            <Icon w={22} h={24}>
                <path d="M1 2h5v6H1zM8 2h5v6H8zM15 2h5v6h-5zM2 11h14v11H2z" stroke="#3f4347" />
                <path d="M6 13l6 3-6 4z" fill="#3f4347" />
            </Icon>
        ),
    },
];

const NavBar = () => (
    <div className="absolute top-[177px] right-[3px] flex h-[199px] w-[30px] flex-col items-center justify-between rounded border border-[#74787c] bg-[#5f6367] py-[3px]">
        <button aria-label="Close navigation bar" className="mr-1 self-end">
            <Icon w={6} h={6}>
                <circle cx="3" cy="3" r="2.500" stroke="#3f4347" />
            </Icon>
        </button>
        {navTools.map(({ name, icon, caret }) => (
            <button key={name} aria-label={name} className="flex flex-col items-center gap-[3px]">
                {icon}
                {caret && <Caret className="text-[#3f4347]" />}
            </button>
        ))}
        <button aria-label="Navigation bar options" className="mr-1 self-end">
            <Icon w={6} h={6}>
                <circle cx="3" cy="3" r="2.500" stroke="#3f4347" />
                <path d="M1 3h4" stroke="#3f4347" />
            </Icon>
        </button>
    </div>
);

const CommandLine = () => {
    const [command, setCommand] = useState('3DORBIT');

    return (
        <div className="absolute bottom-0 left-1/2 w-3/5 -translate-x-1/2 font-['DejaVu_Sans_Mono',monospace] text-[11px]">
            <p className="mb-[2px] ml-[55px] w-fit rounded-t-sm bg-[#55585b] px-[2px] leading-4 whitespace-nowrap text-[#e4e4e4]">
                Press ESC or ENTER to exit, or right-click to display shortcut-menu.
            </p>
            <div className="flex h-6 items-stretch border border-[#888888] bg-white">
                <div className="flex w-[49px] items-center gap-[7px] bg-gradient-to-b from-[#6c6c6c] to-[#444444] pl-[2px]">
                    <Icon w={7} h={16}>
                        <path d="M1.500 0v16M3.500 0v16M5.500 0v16" stroke="#cccccc" strokeDasharray="1 1" />
                    </Icon>
                    <button aria-label="Close command line">
                        <Icon w={9} h={9}>
                            <path d="M1 1l7 7M8 1L1 8" stroke="#fff" strokeWidth="2" />
                        </Icon>
                    </button>
                    <button aria-label="Customize">
                        <Icon w={14} h={14}>
                            <path d="M6 6l6 6" stroke="#eeeeee" strokeWidth="2.500" strokeLinecap="round" />
                            <path d="M5.500 1.500L4.500 4.500 1.500 5.500A3 3 0 1 0 5.500 1.500z" fill="#eeeeee" />
                        </Icon>
                    </button>
                </div>
                <button aria-label="Recent commands" className="flex w-[34px] items-center gap-2 pl-[11px] text-[#999999]">
                    <span className="size-[2px] bg-[#999999]"></span>
                    <Caret className="text-[#999999]" />
                </button>
                <input
                    type="text"
                    aria-label="Command"
                    value={command}
                    onChange={(e) => setCommand(e.target.value)}
                    className="min-w-0 flex-1 bg-white font-bold text-black outline-none"
                />
                <button aria-label="Command history" className="flex w-3 items-center justify-center">
                    <Icon w={6} h={4}>
                        <path d="M0 4h6L3 0z" fill="#111" />
                    </Icon>
                </button>
            </div>
        </div>
    );
};

const Canvas = () => (
    <main className="relative min-h-0 flex-1 overflow-hidden bg-[#212830]">
        <Model />
        <p className="absolute top-[5px] left-[2px] text-[11px] leading-4 text-[#eeeeee]">[−][SE Isometric][Current]</p>
        <div className="absolute top-[9px] right-[10px] flex gap-2">
            <button aria-label="Minimize drawing">
                <Icon w={10} h={10}>
                    <path d="M0 8h9" stroke="#fff" strokeWidth="3" />
                </Icon>
            </button>
            <button aria-label="Restore drawing">
                <Icon w={10} h={10}>
                    <path d="M1 3h6v6H1z" stroke="#fff" strokeWidth="1.600" />
                    <path d="M3 .5h6.500V7" stroke="#fff" />
                    <path d="M3 5h2v2H3z" fill="#fff" />
                </Icon>
            </button>
            <button aria-label="Close drawing">
                <Icon w={10} h={10}>
                    <path d="M1 1l8 8M9 1L1 9" stroke="#fff" strokeWidth="2.200" />
                </Icon>
            </button>
        </div>
        <ViewCube />
        <button className="absolute top-[136px] right-[35px] flex h-4 w-11 items-center justify-center gap-[5px] rounded border border-[#a5a8b0] bg-[#83868e] text-[11px] text-[#35383e]">
            WCS
            <Icon w={8} h={5}>
                <path d="M.5 .5h7L4 4z" stroke="#aaadb4" />
            </Icon>
        </button>
        <NavBar />
        <Ucs />
        <CommandLine />
    </main>
);

const layoutTabShape = '[clip-path:polygon(0_0,100%_0,94%_60%,90%_92%,86%_100%,16%_100%,10%_88%)]';

const StatusRow = () => (
    <footer className="flex h-7 items-start border-t border-[#555555] bg-[#383838] pl-2 text-[11px]">
        <button className={`h-[17px] w-[58px] bg-gradient-to-b from-[#5c5c5c] to-[#808080] leading-4 font-bold text-white ${layoutTabShape}`}>Model</button>
        <button className={`h-[17px] w-[61px] bg-[#585858] leading-4 text-[#b8b8b8] ${layoutTabShape}`}>Layout1</button>
        <button className={`h-[17px] w-[61px] bg-[#585858] leading-4 text-[#b8b8b8] ${layoutTabShape}`}>Layout2</button>
        <button
            aria-label="New layout"
            className="ml-[2px] flex h-[17px] w-[22px] items-center justify-center rounded-tl-[10px] rounded-br-[10px] bg-[#4c4c4c]"
        >
            <Icon w={8} h={8}>
                <path d="M4 0v8M0 4h8" stroke="#dddddd" strokeWidth="2" />
            </Icon>
        </button>
        <p className="mr-1 ml-auto self-center whitespace-nowrap text-white">Press ESC or ENTER to exit, or right-click to display shortcut-menu.</p>
    </footer>
);

/* ---------- taskbar ---------- */

const apps = [
    {
        name: 'Internet Explorer',
        icon: (
            <Icon w={30} h={30}>
                <path d="M25 20c-2 4-5 6-9 6-6 0-10-4-10-10S10 6 16 6s10 4 10 10.500H7" stroke="#1b8fc9" strokeWidth="6.500" />
                <path d="M25 20c-2 4-5 6-9 6-6 0-10-4-10-10S10 6 16 6s10 4 10 10.500H7" stroke="#8fdcf8" strokeWidth="4.500" />
                <path d="M3 27C-1 20 12 5 25 1c4-1 5 2 3 7 0-4-1-5-4-4C12 9 2 20 3 27z" fill="#f7d748" stroke="#caa51e" strokeWidth=".5" />
            </Icon>
        ),
    },
    {
        name: 'File Explorer',
        icon: (
            <Icon w={30} h={28}>
                <path d="M0 5l2-3h7l1 2h18l2 3v18H0z" fill="#e8c468" />
                <path d="M3 3h5v3H3zM11 4h8v2h-8zM21 4h6v2h-6z" fill="#ffffff" />
                <path d="M3 2h2v3H3z" fill="#3a9d3f" />
                <path d="M12 4h3v2h-3z" fill="#c9443a" />
                <path d="M21 5h3v2h-3z" fill="#3b7fc4" />
                <path d="M0 8h30l-1 18H1z" fill="#f9e6a2" />
                <path d="M1 10h28" stroke="#fff5cf" />
                <path d="M5 27V17h20v10h-6v-5h-8v5z" fill="#8cc7ea" stroke="#5fa6d0" strokeWidth=".8" />
            </Icon>
        ),
    },
    {
        name: 'Store',
        icon: (
            <Icon w={28} h={28}>
                <path d="M0 0h28v28H0z" fill="#0d8a12" />
                <path d="M9 10V6c0-4 6-4 6 0v3M12 9V5c0-3 6-2 5 1v4" stroke="#fff" />
                <path d="M5 10l18-2v16l-9 2-9-3z" fill="#ffffff" />
                <path d="M8 13l4-1v4H8zM13 12l6-1v5h-6zM8 17h4v4l-4-1zM13 17h6v5l-6-1z" fill="#0d8a12" />
            </Icon>
        ),
    },
    {
        name: 'Dropbox',
        icon: (
            <span className="flex size-[30px] items-center justify-center rounded-[3px] bg-white text-xl text-[#1467c4]">
                <FaDropbox />
            </span>
        ),
    },
    {
        name: 'Puzzle',
        icon: (
            <Icon w={30} h={30}>
                <rect width="30" height="30" rx="4" fill="#161616" />
                <path d="M0 4a4 4 0 0 1 4-4h22a4 4 0 0 1 4 4v4H0z" fill="#3a3a3a" />
                <path d="M6 6h4a2 2 0 0 1 4 0l3 2-1 3a2 2 0 0 1 0 3l-4 1-5-1 1-3a2 2 0 0 1-2-3z" fill="#d93245" />
                <path d="M17 7h3a2 2 0 0 1 4 1l3 2-2 3 1 3-5-1-4 1-1-4a2 2 0 0 1 1-3z" fill="#f08a2c" />
                <path d="M4 15l4-1 2 1 3 1-1 3 1 3-4 1-1-1-4-1 1-2z" fill="#3b67d0" />
                <path d="M13 15l4 1 3-2 3 2-1 3 4 3-3 1-1 3-3-1-4 1-1-3-2-2 2-2z" fill="#b5d334" />
            </Icon>
        ),
    },
    {
        name: 'Firefox',
        box: true,
        icon: (
            <Icon w={30} h={30}>
                <circle cx="15" cy="16" r="13.500" fill="#f0562c" />
                <path d="M16 1c7 1 13 7 13 14 0 8-6 14-14 14 6-4 8-10 6-15-1-4-5-6-5-13z" fill="#ffcf33" />
                <path d="M3 9l2-5 3 4h6c1 4-2 4-4 6 1 4 7 7 12 4 0 5-5 9-10 8C4 25-1 17 3 9z" fill="#e8343f" />
                <path d="M9 8l4-3c6 0 9 4 9 9-1 5-7 7-11 3 3 0 5-1 6-2-2 0-4-1-4-3l1-3z" fill="#1f4fa5" />
                <path d="M13 12l4-3 3 3-3 4c-2 0-4-1-4-4z" fill="#3187d8" />
            </Icon>
        ),
    },
    {
        name: 'PicsArt',
        icon: (
            <Icon w={30} h={30}>
                <path d="M0 0h30v30H0z" fill="#e7433c" />
                <circle cx="15" cy="14" r="7.500" stroke="#fff" strokeWidth="2.500" />
                <path d="M7.500 13v17" stroke="#fff" strokeWidth="2.500" />
                <circle cx="14" cy="13" r="2" fill="#fff" />
            </Icon>
        ),
    },
    {
        name: 'Chrome',
        icon: (
            <Icon w={28} h={28}>
                <circle cx="14" cy="14" r="13.500" fill="#f7cb2d" />
                <path d="M14 .5A13.500 13.500 0 0 1 26 8H14a6 6 0 0 0-5.500 8L2.300 7.250A13.500 13.500 0 0 1 14 .5z" fill="#dd4b3e" />
                <path d="M2.300 7.250L8.700 17a6 6 0 0 0 7 2.700L13 27.500A13.500 13.500 0 0 1 2.300 7.250z" fill="#3da458" />
                <circle cx="14" cy="14" r="6" fill="#fff" />
                <circle cx="14" cy="14" r="4.800" fill="#4285e8" />
            </Icon>
        ),
    },
    {
        name: 'Filmora',
        box: true,
        icon: (
            <Icon w={28} h={28}>
                <rect width="28" height="28" rx="3" fill="#2b3b49" />
                <path d="M13 4l4 4-4 4-5-4z" fill="#ffffff" />
                <path d="M9 18l9-8 4 4-9 9z" fill="#4aa394" />
            </Icon>
        ),
    },
    {
        name: 'PowerPoint',
        box: true,
        icon: (
            <Icon w={30} h={30}>
                <path d="M2 1h18l6 5-1 17H3z" fill="#f3b9a0" stroke="#fbe5db" />
                <path d="M4 8l25 3-1 17-25-4z" fill="#fff4ee" stroke="#d8825c" />
                <path d="M6 11l20 2-1 12-19-3z" fill="#c9481c" />
                <path d="M8 14h6M8 17h6M8 20h6" stroke="#fff" strokeWidth="1.500" />
                <path d="M20 14a4 4 0 1 0 4 5h-4z" fill="#fff" />
            </Icon>
        ),
    },
    {
        name: 'AutoCAD',
        box: true,
        active: true,
        icon: (
            <Icon w={30} h={30}>
                <path d="M0 0h30v30H0z" fill="#f4eeee" />
                <text x="15" y="25" textAnchor="middle" fontSize="29" fontWeight="900" fontFamily="Lato" fill="#a81f26">
                    A
                </text>
                <path d="M13 5l-4 13 5-8z" fill="#dc5a60" />
                <path d="M6 19l10-4 8 4-9-1z" fill="#7c1015" />
            </Icon>
        ),
    },
    {
        name: 'Recorder',
        box: true,
        icon: (
            <Icon w={28} h={24}>
                <rect x="1" y="2" width="26" height="20" rx="2" fill="#fbfbfb" stroke="#3fa9a4" strokeWidth="1.500" />
                <circle cx="8" cy="12" r="2.500" stroke="#777" />
                <circle cx="8" cy="12" r="1.500" fill="#c9443a" />
                <text x="18" y="15" textAnchor="middle" fontSize="6" fontWeight="700" fontFamily="Open Sans" fill="#2a9c97">
                    REC
                </text>
            </Icon>
        ),
    },
];

const Taskbar = () => (
    <div className="relative flex h-[38px] shrink-0 items-stretch overflow-hidden border-t border-[#3a9fb0] bg-[#4b9ac8]">
        <svg className="absolute inset-0 h-full w-full" viewBox="0 0 1280 37" preserveAspectRatio="none" aria-hidden="true">
            <defs>
                <linearGradient id="teal" x1="0" x2="1">
                    <stop offset="0" stopColor="#20b4c4" />
                    <stop offset="1" stopColor="#34adc0" />
                </linearGradient>
                <linearGradient id="sky" x1="0" x2="1">
                    <stop offset="0" stopColor="#3f8ac6" />
                    <stop offset="1" stopColor="#4c9fc9" />
                </linearGradient>
            </defs>
            <path d="M0 0H235L213 37H0z" fill="url(#teal)" />
            <path d="M235 0H455L440 12L448 37H213z" fill="#45bfa8" />
            <path d="M457 0H1078L1103 37H447L437 15z" fill="url(#sky)" />
            <path d="M1078 0H1280V37H1103z" fill="#4560c6" />
            <path d="M235 0L213 37M745 0L760 37M218 0L272 37M90 0L78 37" stroke="#2b7f96" strokeWidth="1" />
            <path d="M1262 0L1280 20" stroke="#3a4fae" />
        </svg>
        <button aria-label="Start" className="relative flex w-[46px] items-center justify-center">
            <Icon w={26} h={26}>
                <path d="M0 4l10-1.500v10H0zM11.500 2.300L25 .5v12H11.500zM0 14h10v10L0 22.500zM11.500 14H25v12l-13.500-1.800z" fill="#ffffff" />
            </Icon>
        </button>
        <div className="relative ml-[3px] flex gap-1">
            {apps.map(({ name, icon, box, active }) => (
                <button
                    key={name}
                    aria-label={name}
                    className={`flex w-[54px] items-center justify-center ${box ? 'border' : ''} ${box && !active ? 'border-white/50 bg-white/25' : ''} ${active ? 'border-white bg-white/40' : ''}`}
                >
                    {icon}
                </button>
            ))}
        </div>
        <div className="relative mr-4 ml-auto flex items-center text-[11px] text-white">
            <button aria-label="Help" className="mr-[13px]">
                <Icon w={20} h={20}>
                    <circle cx="10" cy="10" r="9" fill="#2ba5c8" stroke="#ffffff" strokeWidth="2" />
                    <text x="10" y="15" textAnchor="middle" fontSize="14" fontWeight="700" fontFamily="Liberation Sans" fill="#fff">
                        ?
                    </text>
                </Icon>
            </button>
            <button aria-label="Show hidden icons" className="mr-3">
                <Icon w={7} h={4}>
                    <path d="M0 4h7L3.500 0z" fill="#fff" />
                </Icon>
            </button>
            <button aria-label="Action center" className="mr-[13px]">
                <Icon w={15} h={14}>
                    <path d="M1.500 1v13" stroke="#fff" strokeWidth="1.500" />
                    <path d="M3 2h5v1h6l-2 3 1 3H7V8H3z" fill="#fff" stroke="#346" strokeWidth=".5" />
                </Icon>
            </button>
            <button aria-label="Battery" className="mr-[9px]">
                <Icon w={8} h={14}>
                    <path d="M1 2.500h6v11H1zM3 1h2" stroke="#fff" strokeWidth="1.500" />
                    <path d="M2 8h4v4H2z" fill="#fff" />
                </Icon>
            </button>
            <button aria-label="Network" className="mr-2">
                <Icon w={14} h={12}>
                    <path d="M1 12v-2M4 12V8M7 12V6M10 12V3" stroke="#fff" strokeWidth="2" />
                    <path d="M13 12V1" stroke="#c3cbea" strokeWidth="2" />
                </Icon>
            </button>
            <button aria-label="Volume" className="mr-[14px]">
                <Icon w={14} h={14}>
                    <path d="M0 5h3l4-4v12L3 9H0z" fill="#fff" />
                    <path d="M9 4c2 2 2 4 0 6M11 2c3 3 3 7 0 10" stroke="#fff" />
                </Icon>
            </button>
            <span className="mr-3">ENG</span>
            <div className="w-[60px] text-center leading-4">
                <p>07:09 AM</p>
                <p>07/07/2018</p>
            </div>
        </div>
    </div>
);

const App = () => (
    <div className="relative flex h-screen flex-col bg-[#17c0c4] font-['Open_Sans','Noto_Sans',sans-serif]">
        <div className="flex min-h-0 flex-1 flex-col border-x-[3px] border-t-[3px] border-[#17c0c4] bg-[#6ae6ea] px-[7px] pb-[7px]">
            <TitleBar />
            <Ribbon />
            <FileTabs />
            <Canvas />
            <StatusRow />
        </div>
        <Taskbar />
        <span className="absolute top-0 left-1/2 h-[6px] w-[10px] -translate-x-1/2 rounded-b bg-[#0e8f98]"></span>
        <span className="absolute top-1/2 -left-[2px] size-2 -translate-y-1/2 border border-[#0e8f98] bg-[#17c0c4]"></span>
        <span className="absolute top-1/2 right-0 size-2 -translate-y-1/2 border border-[#0e8f98] bg-[#17c0c4]"></span>
    </div>
);

export default App;
